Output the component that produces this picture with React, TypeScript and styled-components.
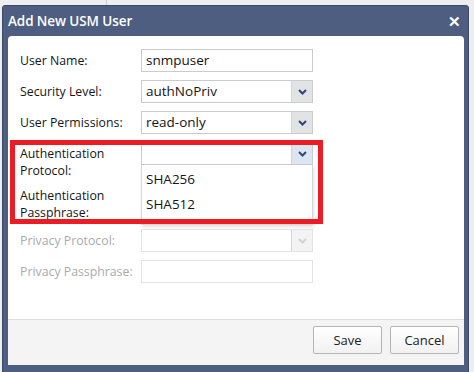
import React from "react";
import styled, { createGlobalStyle } from "styled-components";

const Global = createGlobalStyle`
    html, body {
        margin: 0;
        padding: 0;
        background: #eceef1;
        font-family: "Open Sans", "Liberation Sans", sans-serif;
    }
`;

const Page = styled.div`
    width: 474px;
    height: 372px;
    overflow: hidden;
`;

const TopStrip = styled.div`
    height: 5px;
    display: flex;
`;

const StripCell = styled.div<{ $w: number }>`
    width: ${(p) => p.$w}px;
    border-right: 1px solid #c9cdd3;
`;

const Dialog = styled.div`
    margin-left: 2px;
    width: 467px;
    height: 380px;
    background: #4d5e81;
    border: 1px solid #3c4a68;
    border-radius: 3px 3px 0 0;
    box-sizing: border-box;
    display: flex;
    flex-direction: column;
`;

const TitleBar = styled.div`
    height: 30px;
    display: flex;
    align-items: center;
    justify-content: space-between;
    padding: 0 7px 0 5px;
    color: #fff;
    font-size: 13.5px;
    font-weight: 600;
    letter-spacing: -0.1px;
`;

const Close = styled.span`
    font-size: 15px;
    font-weight: 700;
    line-height: 1;
`;

const Panel = styled.div`
    position: relative;
    margin: 0 4px 0 5px;
    background: #fff;
    border-radius: 4px 4px 0 0;
    height: 329px;
    display: flex;
    flex-direction: column;
`;

const Form = styled.div`
    flex: 1;
    display: flex;
    flex-direction: column;
    gap: 8px;
    padding: 13px 0 0 12px;
`;

const Row = styled.div<{ $h?: number }>`
    display: grid;
    grid-template-columns: 121px 172px;
    align-items: start;
    min-height: ${(p) => p.$h ?? 23}px;
`;

const Label = styled.div<{ $disabled?: boolean; $pad?: number }>`
    font-size: 12.3px;
    line-height: 17px;
    padding-top: ${(p) => p.$pad ?? 3}px;
    color: ${(p) => (p.$disabled ? "#a9abae" : "#151515")};
`;

const Field = styled.div<{ $disabled?: boolean }>`
    height: 23px;
    box-sizing: border-box;
    border: 1px solid ${(p) => (p.$disabled ? "#e2e3e5" : "#c9cbcf")};
    background: #fff;
    display: flex;
    align-items: stretch;
    font-size: 13.5px;
    color: #151515;
`;

const Value = styled.div`
    flex: 1;
    padding-left: 4px;
    line-height: 21px;
`;

const Arrow = styled.div<{ $active?: boolean; $disabled?: boolean }>`
    width: 20px;
    display: flex;
    align-items: center;
    justify-content: center;
    background: ${(p) =>
        p.$active ? "#dbe6f2" : p.$disabled ? "#f3f3f4" : "#e2e3e5"};
    border-left: 1px solid ${(p) => (p.$active ? "#c6d6e8" : "#d4d5d8")};
`;

const List = styled.div`
    position: absolute;
    left: 133px;
    top: 129px;
    width: 172px;
    height: 60px;
    box-sizing: border-box;
    background: #fff;
    border: 1px solid #d4d5d8;
    border-top: none;
    box-shadow: 1px 2px 3px rgba(0, 0, 0, 0.12);
    z-index: 2;
    padding-top: 2px;
`;

const Option = styled.div`
    height: 25px;
    line-height: 25px;
    padding-left: 4px;
    font-size: 13.5px;
    color: #151515;
`;

const Highlight = styled.div`
    position: absolute;
    left: 2px;
    top: 104px;
    width: 313px;
    height: 84px;
    box-sizing: border-box;
    border: 5px solid #ec1c24;
    z-index: 3;
    pointer-events: none;
`;

const Footer = styled.div`
    height: 39px;
    border-top: 1px solid #dcdcdc;
    background: #f4f4f5;
    display: flex;
    justify-content: flex-end;
    align-items: flex-start;
    gap: 8px;
    padding: 6px 5px 0 0;
`;

const Button = styled.button`
    width: 69px;
    height: 28px;
    border: 1px solid #b3b5b9;
    border-radius: 2px;
    background: linear-gradient(#ffffff, #f1f1f2);
    font-family: "Open Sans", "Liberation Sans", sans-serif;
    font-size: 13px;
    color: #222;
    padding: 0;
`;

const Chevron = ({ color }: { color: string }) => (
    <svg width="9" height="6" viewBox="0 0 9 6">
        <path d="M1 1 L4.5 4.5 L8 1" fill="none" stroke={color} strokeWidth="2" />
    </svg>
);

const Select = ({
    value,
    active,
    disabled,
}: {
    value?: string;
    active?: boolean;
    disabled?: boolean;
}) => (
    <Field $disabled={disabled}>
        <Value>{value}</Value>
        <Arrow $active={active} $disabled={disabled}>
            <Chevron color={disabled ? "#d0d2d6" : "#2c4a78"} />
        </Arrow>
    </Field>
);

export default function App() {
    return (
        <Page>
            <Global />
            <TopStrip>
                <StripCell $w={106} />
            </TopStrip>
            <Dialog>
                <TitleBar>
                    <span>Add New USM User</span>
                    <Close>✕</Close>
                </TitleBar>
                <Panel>
                    <Form>
                        <Row>
                            <Label>User Name:</Label>
                            <Field>
                                <Value>snmpuser</Value>
                            </Field>
                        </Row>
                        <Row>
                            <Label>Security Level:</Label>
                            <Select value="authNoPriv" />
                        </Row>
                        <Row>
                            <Label>User Permissions:</Label>
                            <Select value="read-only" />
                        </Row>
                        <Row $h={37}>
                            <Label $pad={3}>
                                Authentication
                                <br />
                                Protocol:
                            </Label>
                            <Select active />
                        </Row>
                        <Row $h={33}>
                            <Label $pad={0}>
                                Authentication
                                <br />
                                Passphrase:
                            </Label>
                            <Field />
                        </Row>
                        <Row>
                            <Label $disabled>Privacy Protocol:</Label>
                            <Select disabled />
                        </Row>
                        <Row>
                            <Label $disabled>Privacy Passphrase:</Label>
                            <Field $disabled />
                        </Row>
                    </Form>
                    <List>
                        <Option>SHA256</Option>
                        <Option>SHA512</Option>
                    </List>
                    <Highlight />
                    <Footer>
                        <Button>Save</Button>
                        <Button>Cancel</Button>
                    </Footer>
                </Panel>
            </Dialog>
        </Page>
    );
}
